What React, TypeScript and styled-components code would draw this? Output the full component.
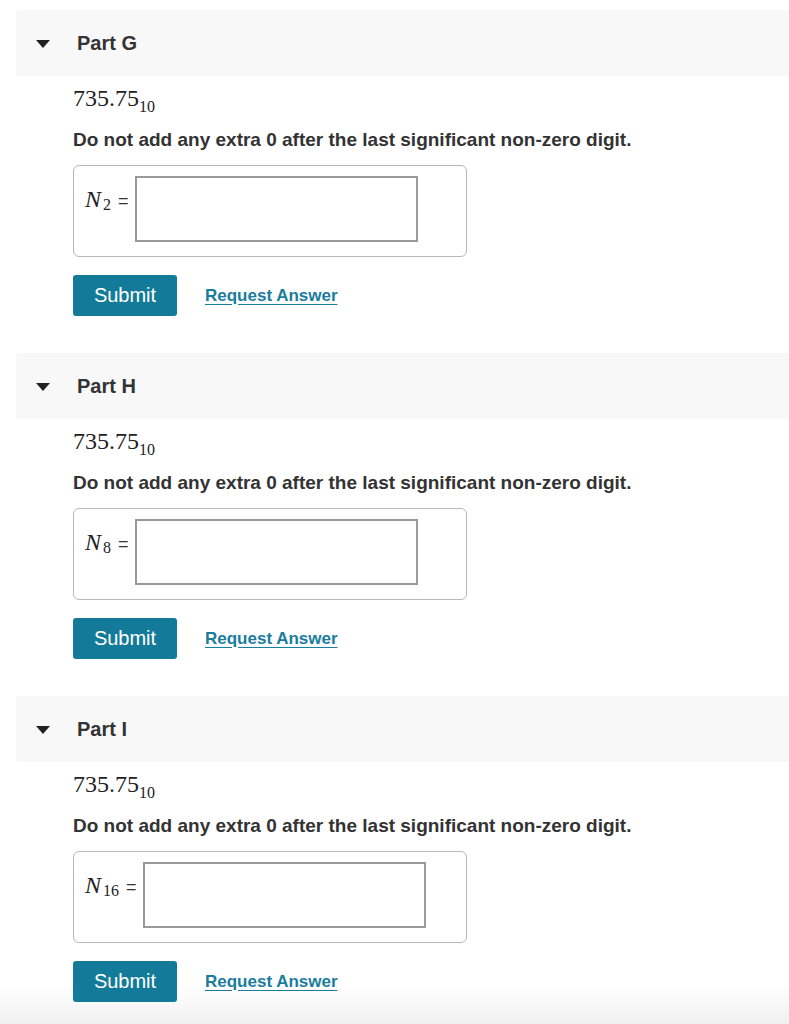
import React from 'react';
import styled, { createGlobalStyle } from 'styled-components';

const GlobalStyle = createGlobalStyle`
  body {
    margin: 0;
    background: #fff;
    font-family: "Liberation Sans", Arial, sans-serif;
  }
`;

interface PartData {
  letter: string;
  base: string;
}

const parts: PartData[] = [
  { letter: 'G', base: '2' },
  { letter: 'H', base: '8' },
  { letter: 'I', base: '16' },
];

const Part = (props: PartData) => (
  <Section>
    <Header>
      <Caret />
      <HeaderTitle>Part {props.letter}</HeaderTitle>
    </Header>
    <Body>
      <MathLine>
        735.75<MathSub>10</MathSub>
      </MathLine>
      <Instruction>Do not add any extra 0 after the last significant non-zero digit.</Instruction>
      <AnswerBox>
        <Label>
          <MathVar>N</MathVar>
          <LabelSub>{props.base}</LabelSub>
          <Equals>=</Equals>
        </Label>
        <AnswerInput type="text" aria-label={`N${props.base}`} />
      </AnswerBox>
      <Actions>
        <SubmitButton>Submit</SubmitButton>
        <RequestLink href="#">Request Answer</RequestLink>
      </Actions>
    </Body>
  </Section>
);

const App = () => (
  <>
    <GlobalStyle />
    <Page>
      {parts.map((p) => (
        <Part key={p.letter} {...p} />
      ))}
    </Page>
  </>
);

const Page = styled.div`
  min-height: 1024px;
  box-sizing: border-box;
  padding: 10px 0 0 16px;
  background: linear-gradient(to bottom, #fff 0, #fff 985px, #f0f0f0 1024px);
`;

const Section = styled.section`
  margin-bottom: 37px;
`;

const Header = styled.div`
  height: 66px;
  background: #f8f8f8;
  display: flex;
  align-items: center;
  padding-left: 20px;
  border-radius: 2px 0 0 2px;
`;

const Caret = styled.span`
  width: 0;
  height: 0;
  border-left: 7.5px solid transparent;
  border-right: 7.5px solid transparent;
  border-top: 8px solid #222;
  margin-top: 2px;
`;

const HeaderTitle = styled.h3`
  margin: 0 0 0 27px;
  font-size: 20px;
  font-weight: bold;
  color: #333;
`;

const Body = styled.div`
  padding-left: 57px;
`;

const MathLine = styled.div`
  margin-top: 7px;
  font-family: "Liberation Serif", "Times New Roman", serif;
  font-size: 24px;
  line-height: 30px;
  color: #222;
`;

const MathSub = styled.span`
  font-size: 16px;
  vertical-align: -6px;
  line-height: 0;
`;

const Instruction = styled.p`
  margin: 16px 0 0;
  font-size: 19px;
  line-height: 22px;
  font-weight: bold;
  color: #333;
`;

const AnswerBox = styled.div`
  margin-top: 14px;
  width: 394px;
  box-sizing: border-box;
  border: 1.5px solid #b8b8b8;
  border-radius: 6px;
  padding: 10px 11px 14px;
  display: flex;
  align-items: flex-start;
`;

const Label = styled.div`
  margin-top: 8px;
  display: flex;
  align-items: baseline;
  line-height: 30px;
  white-space: nowrap;
  color: #222;
`;

const MathVar = styled.span`
  font-family: "Liberation Serif", "Times New Roman", serif;
  font-style: italic;
  font-size: 24px;
  letter-spacing: 1px;
`;

const LabelSub = styled.span`
  font-family: "Liberation Serif", "Times New Roman", serif;
  font-size: 16px;
  position: relative;
  top: 3px;
  margin-left: 1px;
`;

const Equals = styled.span`
  font-size: 18px;
  margin: 0 6px 0 7px;
  color: #333;
`;

const AnswerInput = styled.input`
  width: 283px;
  height: 66px;
  box-sizing: border-box;
  border: 2px solid #9a9a9a;
  border-radius: 0;
  background: #fff;
  padding: 4px 8px;
  font-size: 16px;
  outline: none;
`;

const Actions = styled.div`
  margin-top: 18px;
  display: flex;
  align-items: center;
  gap: 28px;
`;

const SubmitButton = styled.button`
  width: 104px;
  height: 41px;
  background: #137b99;
  color: #fff;
  border: none;
  border-radius: 3px;
  font-family: "Liberation Sans", Arial, sans-serif;
  font-size: 20px;
  cursor: pointer;
`;

const RequestLink = styled.a`
  font-size: 17px;
  font-weight: bold;
  color: #1a7d9e;
  text-decoration: underline;
  text-underline-offset: 3px;
`;

export default App;
